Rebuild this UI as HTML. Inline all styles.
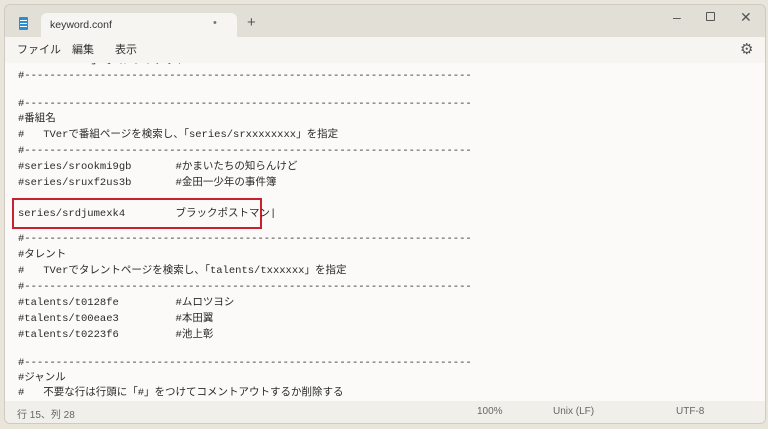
<!DOCTYPE html><html><head><meta charset="utf-8"><style>
body{margin:0;width:768px;height:429px;background:#e9e5da;position:relative;overflow:hidden;font-family:"Liberation Sans","Noto Sans CJK JP",sans-serif}
.win{position:absolute;left:4px;top:4px;width:760px;height:418px;background:#e2dfd7;border:1px solid #cfcbc2;border-radius:6px;overflow:hidden}
.tab{position:absolute;left:36px;top:8px;width:196px;height:26px;background:#f7f5f1;border-radius:6px 6px 0 0}
.menu{position:absolute;left:0;top:32px;width:760px;height:26px;background:#f7f5f1}
.ed{position:absolute;left:0;top:58px;width:760px;height:338px;background:#fbfaf8;overflow:hidden}
.st{position:absolute;left:0;top:396px;width:760px;height:22px;background:#f1efea;font-size:10px;color:#666}
.l{position:absolute;left:13px;font-family:"Liberation Mono","Noto Sans CJK JP",monospace;font-size:10.5px;color:#2a2a2a;white-space:pre;line-height:14px}
.t{position:absolute;font-size:11px;color:#333}
</style></head><body>
<div class="win">
<div class="tab"></div>
<div style="position:absolute;left:14px;top:12px;width:9px;height:13px;background:#2a8fd0;border-radius:1px"></div>
<div style="position:absolute;left:15px;top:15px;width:7px;height:1px;background:#fff;box-shadow:0 3px #fff,0 6px #fff"></div>
<div class="t" style="left:45px;top:14px;font-size:10.5px">keyword.conf</div>
<div class="t" style="left:208px;top:12px;color:#777">•</div>
<div class="t" style="left:242px;top:9px;font-size:15px;color:#555">+</div>
<div class="t" style="left:668px;top:4px;font-size:14px;color:#555">–</div>
<div style="position:absolute;left:701px;top:7px;width:7px;height:7px;border:1.3px solid #555;border-radius:1px"></div>
<div class="t" style="left:735px;top:4px;font-size:14px;color:#555">✕</div>
<div class="menu">
<span class="t" style="left:12px;top:4px">ファイル</span><span class="t" style="left:67px;top:4px">編集</span><span class="t" style="left:110px;top:4px">表示</span>
<span class="t" style="left:735px;top:3px;font-size:15px;color:#555">⚙</span></div>
<div class="ed">
<div class="l" style="top:-9px">#        「#」でコメントアウト</div>
<div class="l" style="top:6px">#-----------------------------------------------------------------------</div>
<div class="l" style="top:34px">#-----------------------------------------------------------------------</div>
<div class="l" style="top:49px">#番組名</div>
<div class="l" style="top:65px">#   TVerで番組ページを検索し、「series/srxxxxxxxx」を指定</div>
<div class="l" style="top:81px">#-----------------------------------------------------------------------</div>
<div class="l" style="top:97px">#series/srookmi9gb       #かまいたちの知らんけど</div>
<div class="l" style="top:113px">#series/sruxf2us3b       #金田一少年の事件簿</div>
<div style="position:absolute;left:7px;top:135px;width:250px;height:31px;border:2px solid #c8202e;box-sizing:border-box"></div>
<div class="l" style="top:144px">series/srdjumexk4        ブラックポストマン|</div>
<div class="l" style="top:169px">#-----------------------------------------------------------------------</div>
<div class="l" style="top:185px">#タレント</div>
<div class="l" style="top:201px">#   TVerでタレントページを検索し、「talents/txxxxxx」を指定</div>
<div class="l" style="top:217px">#-----------------------------------------------------------------------</div>
<div class="l" style="top:233px">#talents/t0128fe         #ムロツヨシ</div>
<div class="l" style="top:249px">#talents/t00eae3         #本田翼</div>
<div class="l" style="top:265px">#talents/t0223f6         #池上彰</div>
<div class="l" style="top:293px">#-----------------------------------------------------------------------</div>
<div class="l" style="top:308px">#ジャンル</div>
<div class="l" style="top:323px">#   不要な行は行頭に「#」をつけてコメントアウトするか削除する</div>
</div>
<div class="st"><span style="position:absolute;left:12px;top:5px">行 15、列 28</span><span style="position:absolute;left:472px;top:5px">100%</span><span style="position:absolute;left:548px;top:5px">Unix (LF)</span><span style="position:absolute;left:671px;top:5px">UTF-8</span></div>
</div>
</body></html>
